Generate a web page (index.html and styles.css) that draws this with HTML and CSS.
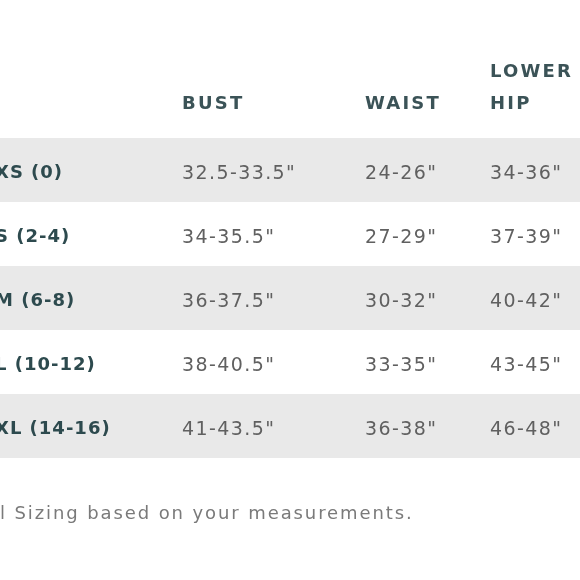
FILE: index.html
```html
<!DOCTYPE html>
<html lang="en">
<head>
<meta charset="utf-8">
<title>Size Chart</title>
<link rel="stylesheet" href="styles.css">
</head>
<body>
<div class="chart">
  <div class="row head">
    <div class="cell"></div>
    <div class="cell">BUST</div>
    <div class="cell">WAIST</div>
    <div class="cell">LOWER<br>HIP</div>
  </div>
  <div class="row shade">
    <div class="cell size">XS (0)</div>
    <div class="cell val">32.5-33.5"</div>
    <div class="cell val">24-26"</div>
    <div class="cell val">34-36"</div>
  </div>
  <div class="row">
    <div class="cell size">S (2-4)</div>
    <div class="cell val">34-35.5"</div>
    <div class="cell val">27-29"</div>
    <div class="cell val">37-39"</div>
  </div>
  <div class="row shade">
    <div class="cell size">M (6-8)</div>
    <div class="cell val">36-37.5"</div>
    <div class="cell val">30-32"</div>
    <div class="cell val">40-42"</div>
  </div>
  <div class="row">
    <div class="cell size">L (10-12)</div>
    <div class="cell val">38-40.5"</div>
    <div class="cell val">33-35"</div>
    <div class="cell val">43-45"</div>
  </div>
  <div class="row shade">
    <div class="cell size">XL (14-16)</div>
    <div class="cell val">41-43.5"</div>
    <div class="cell val">36-38"</div>
    <div class="cell val">46-48"</div>
  </div>
  <p class="note">l Sizing based on your measurements.</p>
</div>
</body>
</html>
```
FILE: styles.css
```css
html, body {
  margin: 0;
  padding: 0;
  background: #ffffff;
  width: 580px;
  height: 580px;
  overflow: hidden;
}

.chart {
  margin-left: -5px;
  width: 600px;
  font-family: "DejaVu Sans", "Liberation Sans", sans-serif;
  filter: blur(0.5px);
}

.row {
  display: grid;
  grid-template-columns: 187px 183px 125px 105px;
  height: 64px;
  align-items: center;
  padding-top: 3px;
  box-sizing: border-box;
}

.row.shade {
  background: #e9e9e9;
}

.row.head {
  height: 138px;
  align-items: end;
  padding-top: 0;
  padding-bottom: 19px;
}

.head .cell {
  font-size: 18px;
  font-weight: bold;
  letter-spacing: 2.2px;
  line-height: 32px;
  color: #3b5357;
}

.size {
  font-size: 18px;
  font-weight: bold;
  letter-spacing: 1px;
  color: #2d4a4e;
  line-height: 22px;
}

.val {
  font-size: 19px;
  letter-spacing: 1.4px;
  color: #606060;
  line-height: 22px;
}

.note {
  margin: 44px 0 0 5px;
  font-size: 18px;
  letter-spacing: 1.9px;
  color: #7a7a7a;
  line-height: 22px;
}
```
